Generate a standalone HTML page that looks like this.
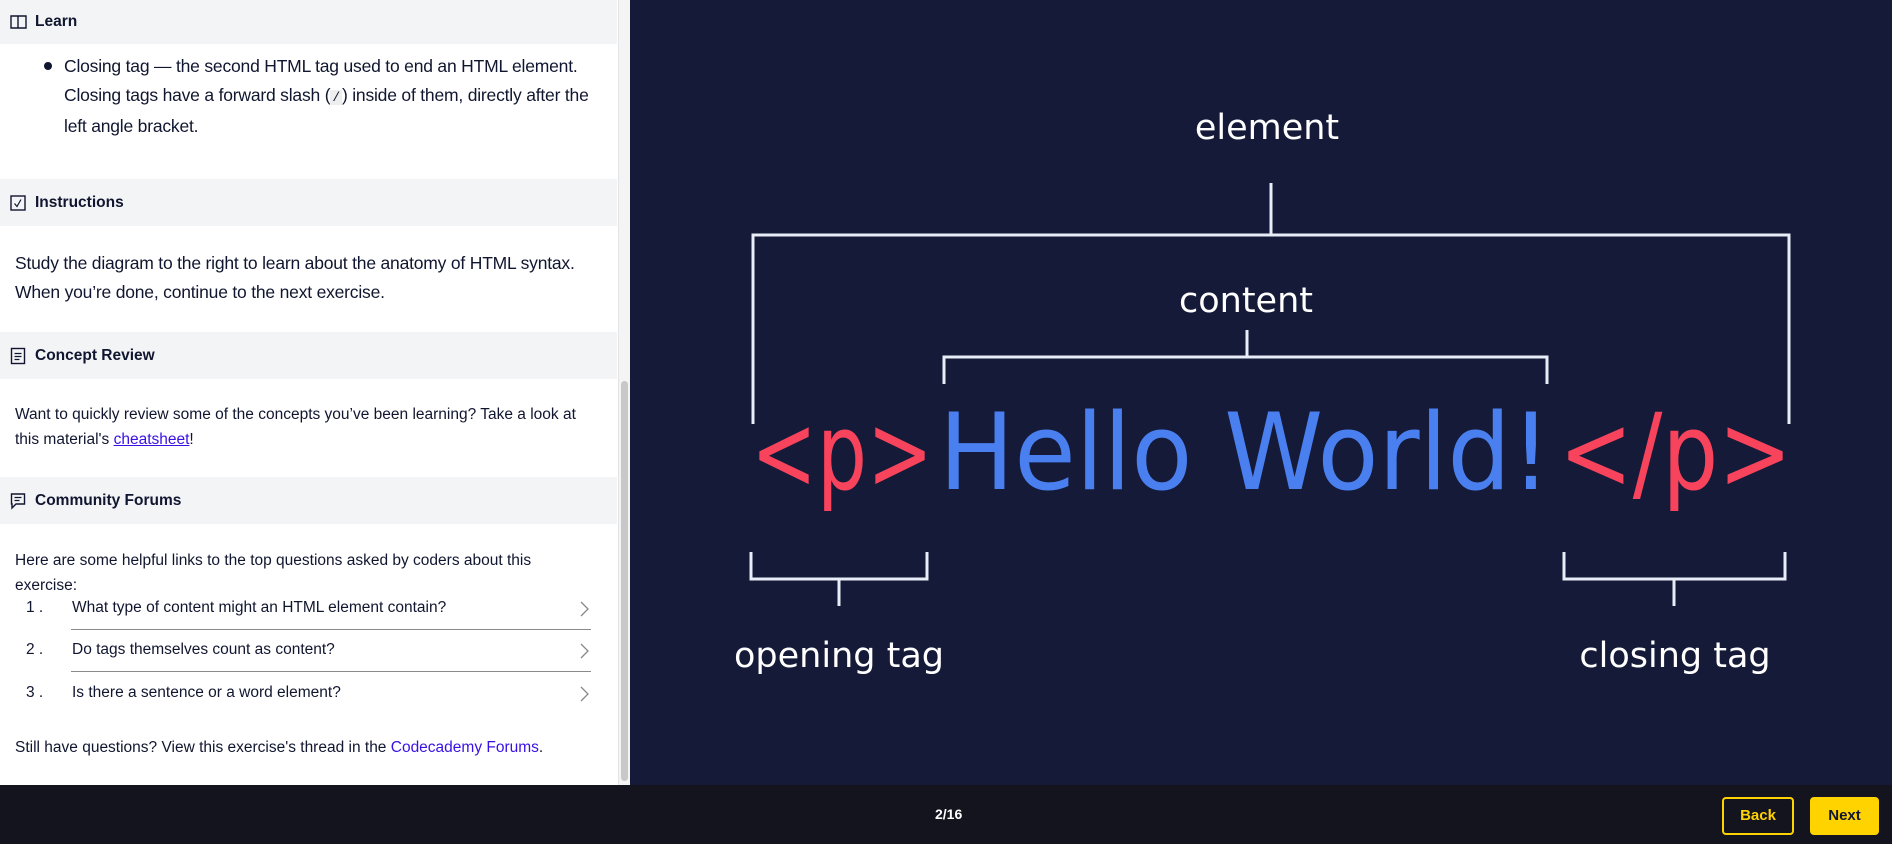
<!DOCTYPE html>
<html><head><meta charset="utf-8"><style>
*{margin:0;padding:0;box-sizing:border-box}
body{width:1892px;height:844px;overflow:hidden;font-family:"Liberation Sans",sans-serif;color:#10162f;background:#fff;position:relative}
.panel{position:absolute;left:0;top:0;width:617px;height:785px;background:#fff}
.hdr{position:absolute;left:0;width:617px;background:#f3f4f6;font-weight:bold;font-size:15.5px}
.hdr span{position:absolute;left:35px;top:50%;transform:translateY(-50%)}
.hdr svg{position:absolute;left:10px;top:50%;transform:translateY(-50%)}
.t{position:absolute;font-size:17.5px;line-height:28.5px;letter-spacing:-0.2px}
.s{position:absolute;font-size:15.5px;line-height:25px}
.sb{position:absolute;left:618px;top:0;width:12px;height:785px;background:#f4f4f4;border-left:1px solid #e4e4e4}
.sb div{position:absolute;left:2px;top:381px;width:7px;height:400px;background:#c8c8c8;border-radius:4px}
.dark{position:absolute;left:630px;top:0;width:1262px;height:785px;background:#141a38}
.foot{position:absolute;left:0;top:785px;width:1892px;height:59px;background:#14141e}
.foot .pg{position:absolute;left:935px;top:21px;color:#fff;font-weight:bold;font-size:14px}
.btn{position:absolute;top:12px;height:38px;border-radius:4px;font-weight:bold;font-size:15px;text-align:center;line-height:34px}
.li{position:absolute;left:26px;font-size:15.5px}
.lt{position:absolute;left:72px;font-size:15.5px}
.dv{position:absolute;left:71px;width:520px;height:1px;background:#8a8a8a}
.ch{position:absolute;left:578px}
</style></head><body>
<div class="panel">
 <div class="hdr" style="top:0;height:44px"><svg width="18" height="16" viewBox="0 0 18 16"><path d="M1 2h7v12H1zM8 2h8v12H8" fill="none" stroke="#10162f" stroke-width="1.4"/></svg><span>Learn</span></div>
 <div style="position:absolute;left:44px;top:62px;width:8px;height:8px;border-radius:50%;background:#10162f"></div>
 <div class="t" style="left:64px;top:52px;width:538px">Closing tag — the second HTML tag used to end an HTML element. Closing tags have a forward slash (<span style="background:#eee;font-family:'Liberation Mono',monospace;font-size:13px;padding:0 2px">/</span>) inside of them, directly after the left angle bracket.</div>
 <div class="hdr" style="top:179px;height:47px"><svg width="16" height="16" viewBox="0 0 16 16"><rect x="1" y="1" width="14" height="14" fill="none" stroke="#10162f" stroke-width="1.4"/><path d="M4.5 8.5l2.5 3 4-7" fill="none" stroke="#10162f" stroke-width="1.2"/></svg><span>Instructions</span></div>
 <div class="t" style="left:15px;top:249px;width:600px">Study the diagram to the right to learn about the anatomy of HTML syntax. When you’re done, continue to the next exercise.</div>
 <div class="hdr" style="top:332px;height:47px"><svg width="16" height="17" viewBox="0 0 16 17"><rect x="1.5" y="1" width="13" height="15" fill="none" stroke="#10162f" stroke-width="1.4"/><path d="M4.5 6h7M4.5 9h7M4.5 12h5" stroke="#10162f" stroke-width="1.2"/></svg><span>Concept Review</span></div>
 <div class="s" style="left:15px;top:402px;width:575px">Want to quickly review some of the concepts you’ve been learning? Take a look at this material's <span style="color:#3a10e5;text-decoration:underline">cheatsheet</span>!</div>
 <div class="hdr" style="top:477px;height:47px"><svg width="16" height="17" viewBox="0 0 16 17"><path d="M1.5 1.5h13v10H6l-4 4v-4H1.5z" fill="none" stroke="#10162f" stroke-width="1.4"/><path d="M4.5 5h7M4.5 8h5" stroke="#10162f" stroke-width="1.2"/></svg><span>Community Forums</span></div>
 <div class="s" style="left:15px;top:548px;width:560px">Here are some helpful links to the top questions asked by coders about this exercise:</div>
 <div class="li" style="top:599px">1 .</div><div class="lt" style="top:599px">What type of content might an HTML element contain?</div>
 <svg class="ch" style="top:600px" width="12" height="18"><path d="M3 2l7 7-7 7" fill="none" stroke="#888" stroke-width="1.3"/></svg>
 <div class="dv" style="top:629px"></div>
 <div class="li" style="top:641px">2 .</div><div class="lt" style="top:641px">Do tags themselves count as content?</div>
 <svg class="ch" style="top:642px" width="12" height="18"><path d="M3 2l7 7-7 7" fill="none" stroke="#888" stroke-width="1.3"/></svg>
 <div class="dv" style="top:671px"></div>
 <div class="li" style="top:684px">3 .</div><div class="lt" style="top:684px">Is there a sentence or a word element?</div>
 <svg class="ch" style="top:685px" width="12" height="18"><path d="M3 2l7 7-7 7" fill="none" stroke="#888" stroke-width="1.3"/></svg>
 <div class="s" style="left:15px;top:735px">Still have questions? View this exercise's thread in the <span style="color:#3a10e5">Codecademy Forums</span>.</div>
</div>
<div class="sb"><div></div></div>
<div class="dark">
<svg width="1262" height="785" viewBox="630 0 1262 785" style="position:absolute;left:0;top:0">
 <g fill="none" stroke="#e8edf8" stroke-width="3">
  <path d="M1271 183V235M753 424V235H1789V424"/>
  <path d="M1247 330V357M944 384V357H1547V384"/>
  <path d="M751 552V579H927V552M839 579V606"/>
  <path d="M1564 552V579H1785V552M1674 579V606"/>
 </g>
 <g font-family="'DejaVu Sans',sans-serif" fill="#fff" font-size="35" text-anchor="middle">
  <text x="1267" y="139">element</text>
  <text x="1246" y="312">content</text>
  <text x="839" y="667">opening tag</text>
  <text x="1675" y="667">closing tag</text>
 </g>
 <g font-family="'DejaVu Sans',sans-serif" font-size="106">
  <text x="751" y="489" fill="#f7435b" textLength="182" lengthAdjust="spacingAndGlyphs">&lt;p&gt;</text>
  <text x="939" y="489" fill="#4a7ff0" textLength="612" lengthAdjust="spacingAndGlyphs">Hello World!</text>
  <text x="1559" y="489" fill="#f7435b" textLength="233" lengthAdjust="spacingAndGlyphs">&lt;/p&gt;</text>
 </g>
</svg>
</div>
<div class="foot">
 <div class="pg">2/16</div>
 <div class="btn" style="left:1722px;width:72px;border:2px solid #ffd300;color:#ffd300">Back</div>
 <div class="btn" style="left:1810px;width:69px;background:#ffd300;color:#10162f;line-height:38px">Next</div>
</div>
</body></html>
